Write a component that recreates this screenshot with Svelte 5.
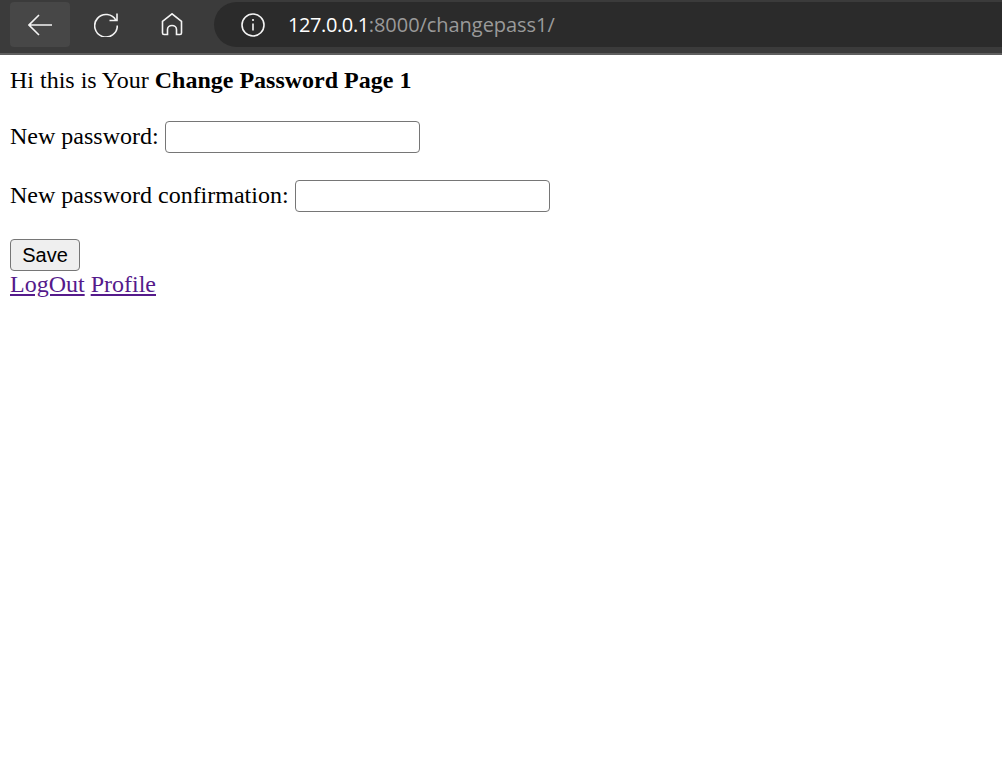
<script>
    let newPassword = '';
    let confirmation = '';
</script>

<header class="toolbar">
    <button class="nav back" aria-label="Back">
        <svg width="24" height="22" viewBox="0 0 24 22"><path d="M24 11H1M11 1 1 11l10 10" /></svg>
    </button>
    <button class="nav" aria-label="Reload">
        <svg width="24" height="24" viewBox="0 0 24 24"><path d="M23.300 12.500A11.300 11.300 0 1 1 22 7.500M23 .5v7h-7.500" /></svg>
    </button>
    <button class="nav" aria-label="Home">
        <svg width="24" height="24" viewBox="0 0 24 24"><path d="M12 .8 2.500 8.500v11.500a1.500 1.500 0 0 0 1.500 1.500h3.500v-5a4.500 4 0 0 1 9 0v5H20a1.500 1.500 0 0 0 1.500-1.500V8.500z" /></svg>
    </button>
    <div class="address">
        <svg class="info" width="24" height="24" viewBox="0 0 24 24">
            <circle cx="12" cy="12" r="11" />
            <path d="M12 10.500v7M12 6v2" />
        </svg>
        <span class="host">127.0.0.1</span><span class="rest">:8000/changepass1/</span>
    </div>
</header>

<main>
    <p>Hi this is Your <strong>Change Password Page 1</strong></p>
    <form on:submit|preventDefault>
        <p>
            <label for="pass1">New password:</label>
            <input id="pass1" type="password" bind:value={newPassword} />
        </p>
        <p>
            <label for="pass2">New password confirmation:</label>
            <input id="pass2" type="password" bind:value={confirmation} />
        </p>
        <button class="save" type="submit">Save</button>
    </form>
    <a href="#logout">LogOut</a>
    <a href="#profile">Profile</a>
</main>

<style>
    :global(body) {
        background: #fff;
    }
    .toolbar {
        display: flex;
        align-items: center;
        height: 55px;
        box-sizing: border-box;
        padding: 2px 0 6px 10px;
        background: #3b3b3b;
        border-bottom: 2px solid #5f5f5f;
    }
    .nav {
        display: flex;
        align-items: center;
        justify-content: center;
        width: 60px;
        height: 45px;
        margin-right: 6px;
        padding: 0;
        background: none;
        border: 0;
        border-radius: 4px;
    }
    .back {
        background: #474747;
    }
    .nav svg, .info {
        fill: none;
        stroke: #f4f4f4;
        stroke-width: 1.6;
    }
    .address {
        display: flex;
        align-items: center;
        flex: 1;
        height: 45px;
        margin-left: 6px;
        padding-left: 27px;
        background: #2b2b2b;
        border-radius: 23px 0 0 23px;
        font-family: "Open Sans", sans-serif;
        font-size: 20px;
    }
    .info {
        margin-right: 23px;
    }
    .host {
        color: #fff;
        letter-spacing: -0.4px;
    }
    .rest {
        color: #9a9a9a;
        letter-spacing: -0.05px;
    }
    main {
        padding: 12px 10px 0;
        font-family: "Liberation Serif", serif;
        font-size: 24px;
        line-height: 27px;
        color: #000;
    }
    p {
        margin: 0 0 27px;
    }
    input {
        box-sizing: border-box;
        width: 255px;
        height: 32px;
        margin: 0;
        padding: 1px 3px;
        vertical-align: baseline;
        background: #fff;
        border: 1px solid #767676;
        border-radius: 4px;
        font-size: 20px;
    }
    .save {
        display: block;
        box-sizing: border-box;
        width: 70px;
        height: 32px;
        padding: 0;
        background: #efefef;
        border: 1px solid #767676;
        border-radius: 4px;
        font-family: "Liberation Sans", sans-serif;
        font-size: 20px;
        color: #000;
    }
    a {
        color: #551a8b;
    }
</style>
